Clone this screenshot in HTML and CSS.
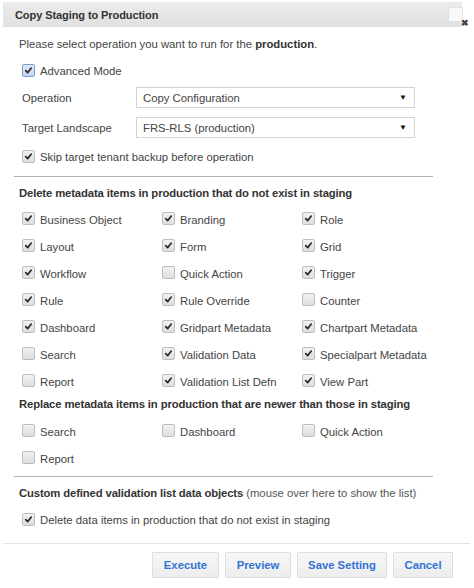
FILE: index.html
```html
<!DOCTYPE html>
<html>
<head>
<meta charset="utf-8">
<link rel="stylesheet" href="styles.css">
</head>
<body>
<div class="dialog">
  <div class="titlebar">
    <span class="title">Copy Staging to Production</span>
    <span class="close"><span class="close-box"></span><span class="close-x">&#10006;</span></span>
  </div>
  <div class="content">
    <div class="intro">Please select operation you want to run for the <b>production</b>.</div>
    <label class="check row-advanced"><span class="box focus on"><svg viewBox="0 0 13 13"><path d="M3.2 6.6 L5.5 9 L9.8 3.6"/></svg></span>Advanced Mode</label>
    <div class="field field-op">
      <span class="field-label">Operation</span>
      <div class="select">Copy Configuration<span class="arrow">&#9660;</span></div>
    </div>
    <div class="field field-target">
      <span class="field-label">Target Landscape</span>
      <div class="select">FRS-RLS (production)<span class="arrow">&#9660;</span></div>
    </div>
    <label class="check row-skip"><span class="box on"><svg viewBox="0 0 13 13"><path d="M3.2 6.6 L5.5 9 L9.8 3.6"/></svg></span>Skip target tenant backup before operation</label>
    <div class="rule"></div>
    <div class="heading h-delete">Delete metadata items in production that do not exist in staging</div>
    <div class="grid grid-delete">
      <label class="check"><span class="box on"><svg viewBox="0 0 13 13"><path d="M3.2 6.6 L5.5 9 L9.8 3.6"/></svg></span>Business Object</label>
      <label class="check"><span class="box on"><svg viewBox="0 0 13 13"><path d="M3.2 6.6 L5.5 9 L9.8 3.6"/></svg></span>Branding</label>
      <label class="check"><span class="box on"><svg viewBox="0 0 13 13"><path d="M3.2 6.6 L5.5 9 L9.8 3.6"/></svg></span>Role</label>
      <label class="check"><span class="box on"><svg viewBox="0 0 13 13"><path d="M3.2 6.6 L5.5 9 L9.8 3.6"/></svg></span>Layout</label>
      <label class="check"><span class="box on"><svg viewBox="0 0 13 13"><path d="M3.2 6.6 L5.5 9 L9.8 3.6"/></svg></span>Form</label>
      <label class="check"><span class="box on"><svg viewBox="0 0 13 13"><path d="M3.2 6.6 L5.5 9 L9.8 3.6"/></svg></span>Grid</label>
      <label class="check"><span class="box on"><svg viewBox="0 0 13 13"><path d="M3.2 6.6 L5.5 9 L9.8 3.6"/></svg></span>Workflow</label>
      <label class="check"><span class="box"></span>Quick Action</label>
      <label class="check"><span class="box on"><svg viewBox="0 0 13 13"><path d="M3.2 6.6 L5.5 9 L9.8 3.6"/></svg></span>Trigger</label>
      <label class="check"><span class="box on"><svg viewBox="0 0 13 13"><path d="M3.2 6.6 L5.5 9 L9.8 3.6"/></svg></span>Rule</label>
      <label class="check"><span class="box on"><svg viewBox="0 0 13 13"><path d="M3.2 6.6 L5.5 9 L9.8 3.6"/></svg></span>Rule Override</label>
      <label class="check"><span class="box"></span>Counter</label>
      <label class="check"><span class="box on"><svg viewBox="0 0 13 13"><path d="M3.2 6.6 L5.5 9 L9.8 3.6"/></svg></span>Dashboard</label>
      <label class="check"><span class="box on"><svg viewBox="0 0 13 13"><path d="M3.2 6.6 L5.5 9 L9.8 3.6"/></svg></span>Gridpart Metadata</label>
      <label class="check"><span class="box on"><svg viewBox="0 0 13 13"><path d="M3.2 6.6 L5.5 9 L9.8 3.6"/></svg></span>Chartpart Metadata</label>
      <label class="check"><span class="box"></span>Search</label>
      <label class="check"><span class="box on"><svg viewBox="0 0 13 13"><path d="M3.2 6.6 L5.5 9 L9.8 3.6"/></svg></span>Validation Data</label>
      <label class="check"><span class="box on"><svg viewBox="0 0 13 13"><path d="M3.2 6.6 L5.5 9 L9.8 3.6"/></svg></span>Specialpart Metadata</label>
      <label class="check"><span class="box"></span>Report</label>
      <label class="check"><span class="box on"><svg viewBox="0 0 13 13"><path d="M3.2 6.6 L5.5 9 L9.8 3.6"/></svg></span>Validation List Defn</label>
      <label class="check"><span class="box on"><svg viewBox="0 0 13 13"><path d="M3.2 6.6 L5.5 9 L9.8 3.6"/></svg></span>View Part</label>
    </div>
    <div class="heading h-replace">Replace metadata items in production that are newer than those in staging</div>
    <div class="grid grid-replace">
      <label class="check"><span class="box"></span>Search</label>
      <label class="check"><span class="box"></span>Dashboard</label>
      <label class="check"><span class="box"></span>Quick Action</label>
      <label class="check"><span class="box"></span>Report</label>
    </div>
    <div class="rule rule-2"></div>
    <div class="heading h-custom">Custom defined validation list data objects <span class="note">(mouse over here to show the list)</span></div>
    <label class="check row-deldata"><span class="box on"><svg viewBox="0 0 13 13"><path d="M3.2 6.6 L5.5 9 L9.8 3.6"/></svg></span>Delete data items in production that do not exist in staging</label>
  </div>
  <div class="footer">
    <button class="btn btn-execute">Execute</button>
    <button class="btn btn-preview">Preview</button>
    <button class="btn btn-save">Save Setting</button>
    <button class="btn btn-cancel">Cancel</button>
  </div>
</div>
</body>
</html>
```

FILE: styles.css
```css
html, body {
  margin: 0;
  padding: 0;
  background: #ffffff;
}
body {
  font-family: "Liberation Sans", Arial, sans-serif;
  font-size: 11.3px;
  color: #444;
}
.dialog {
  width: 474px;
  height: 588px;
  position: relative;
}
.titlebar {
  margin: 2px 12px 0 3px;
  height: 25px;
  background: linear-gradient(#ececec, #e0e0e0);
  display: flex;
  align-items: center;
  padding-left: 12px;
  position: relative;
}
.title {
  font-weight: bold;
  color: #333;
  font-size: 11px;
  letter-spacing: -0.08px;
  margin-top: 1px;
}
.close {
  position: absolute;
  right: -7px;
  top: 4px;
  width: 20px;
  height: 22px;
}
.close-box {
  position: absolute;
  left: -1px;
  top: 1px;
  width: 13px;
  height: 13px;
  background: #f8f8f8;
  border: 1px solid #e2e2e2;
}
.close-x {
  position: absolute;
  left: 12px;
  top: 13px;
  font-size: 9px;
  line-height: 9px;
  color: #444;
  font-weight: bold;
}
.content {
  padding: 7px 0 0 19px;
}
.intro {
  height: 20px;
  line-height: 20px;
  color: #444;
}
.intro b {
  color: #333;
}
.check {
  display: flex;
  align-items: center;
  height: 20px;
  color: #444;
  white-space: nowrap;
}
.box {
  width: 13px;
  height: 13px;
  box-sizing: border-box;
  border: 1px solid #bdbdbd;
  border-radius: 2px;
  background: linear-gradient(#f2f2f2, #dedede);
  margin: 0 5px 0 3px;
  flex: none;
  position: relative;
  top: -1px;
}
.box svg {
  width: 11px;
  height: 11px;
  display: block;
}
.box svg path {
  fill: none;
  stroke: #2b2b2b;
  stroke-width: 2;
  stroke-linecap: round;
  stroke-linejoin: round;
}
.box.focus {
  border-color: #7b9bd1;
  background: linear-gradient(#dfe8f6, #c7d6ee);
}
.row-advanced {
  margin-top: 7px;
}
.field {
  display: flex;
  align-items: center;
  height: 21px;
}
.field-op {
  margin-top: 6px;
}
.field-target {
  margin-top: 9px;
}
.field-label {
  width: 114px;
  padding-left: 3px;
  color: #444;
}
.select {
  width: 279px;
  height: 21px;
  box-sizing: border-box;
  border: 1px solid #d4d4d4;
  display: flex;
  align-items: center;
  padding-left: 6px;
  position: relative;
  color: #444;
}
.arrow {
  position: absolute;
  right: 7px;
  top: 5px;
  font-size: 8px;
  color: #111;
}
.row-skip {
  margin-top: 9px;
}
.rule {
  margin: 9px 0 0 -5px;
  width: 419px;
  height: 1px;
  background: #b0b0b0;
}
.heading {
  font-weight: bold;
  color: #333;
  height: 20px;
  line-height: 20px;
  letter-spacing: -0.13px;
}
.h-delete {
  margin-top: 6px;
}
.grid {
  display: grid;
  grid-template-columns: 140px 140px 140px;
  grid-auto-rows: 27px;
}
.grid .check {
  height: 27px;
}
.grid-delete {
  margin-top: 3px;
}
.h-replace {
  height: 18px;
  line-height: 18px;
}
.grid-replace {
  margin-top: 5px;
}
.rule-2 {
  margin-top: 4px;
}
.h-custom {
  margin-top: 6px;
}
.note {
  font-weight: normal;
  color: #555;
  letter-spacing: 0;
}
.row-deldata {
  margin-top: 7px;
}
.footer {
  margin: 13px 4px 0 3px;
  border-top: 1px solid #e3e3e3;
  padding-top: 8px;
  display: flex;
  justify-content: flex-end;
  gap: 6px;
  padding-right: 17px;
}
.btn {
  height: 26px;
  font-family: "Liberation Sans", Arial, sans-serif;
  font-size: 11.3px;
  font-weight: bold;
  color: #3274d4;
  background: linear-gradient(#f7f7f7, #ededed);
  border: 1px solid #dedede;
  border-radius: 1px;
  padding: 0;
}
.btn-execute { width: 67px; }
.btn-preview { width: 66px; }
.btn-save { width: 90px; }
.btn-cancel { width: 60px; }
```
